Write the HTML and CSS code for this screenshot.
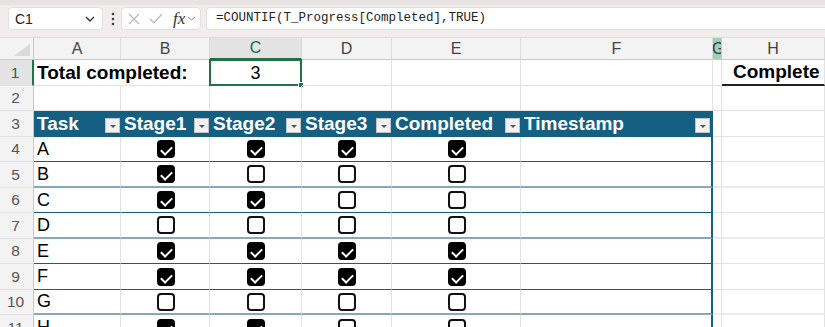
FILE: index.html
```html
<!DOCTYPE html>
<html>
<head>
<meta charset="utf-8">
<link rel="stylesheet" href="styles.css">
</head>
<body>
<div class="topbar">
  <div class="namebox"><span class="nb-text">C1</span><svg class="nb-chev" width="10" height="6" viewBox="0 0 10 6"><path d="M1 1 L5 5 L9 1" fill="none" stroke="#333" stroke-width="1.3"/></svg></div>
  <svg class="dots" width="4" height="14" viewBox="0 0 4 14"><circle cx="2" cy="2" r="1.3" fill="#444"/><circle cx="2" cy="7" r="1.3" fill="#444"/><circle cx="2" cy="12" r="1.3" fill="#444"/></svg>
  <div class="funcbox">
    <svg class="ic-x" width="12" height="12" viewBox="0 0 12 12"><path d="M1 1 L11 11 M11 1 L1 11" stroke="#b8b8b8" stroke-width="1.2" fill="none"/></svg>
    <svg class="ic-ok" width="14" height="11" viewBox="0 0 14 11"><path d="M1 6 L5 10 L13 1" stroke="#b8b8b8" stroke-width="1.2" fill="none"/></svg>
    <span class="fx">fx</span>
    <svg class="fx-chev" width="9" height="5" viewBox="0 0 9 5"><path d="M1 1 L4.5 4 L8 1" fill="none" stroke="#888" stroke-width="1"/></svg>
  </div>
  <div class="formula">=COUNTIF(T_Progress[Completed],TRUE)</div>
</div>

<div class="sheet">
  <div class="row">
    <div class="ch corner"><svg width="16" height="12" viewBox="0 0 16 12"><path d="M16 0 L16 12 L0 12 Z" fill="#d9d9d9"/></svg></div>
    <div class="ch">A</div><div class="ch">B</div><div class="ch sel">C</div><div class="ch">D</div><div class="ch">E</div><div class="ch">F</div><div class="ch gsel"><span>G</span></div><div class="ch">H</div>
  </div>

  <div class="row">
    <div class="rh rsel">1</div>
    <div class="c overflow bold">Total completed:</div>
    <div class="c"></div>
    <div class="c active">3<span class="handle"></span></div>
    <div class="c"></div><div class="c"></div><div class="c"></div><div class="c"></div>
    <div class="c heading bold">Complete</div>
  </div>

  <div class="row">
    <div class="rh">2</div>
    <div class="c"></div><div class="c"></div><div class="c"></div><div class="c"></div><div class="c"></div><div class="c"></div><div class="c"></div><div class="c"></div>
  </div>

  <div class="row">
    <div class="rh">3</div>
    <div class="th"><span>Task</span><span class="dd"></span></div>
    <div class="th"><span>Stage1</span><span class="dd"></span></div>
    <div class="th"><span>Stage2</span><span class="dd"></span></div>
    <div class="th"><span>Stage3</span><span class="dd"></span></div>
    <div class="th"><span>Completed</span><span class="dd"></span></div>
    <div class="th last"><span>Timestamp</span><span class="dd"></span></div>
    <div class="c"></div><div class="c"></div>
  </div>

  <div class="row dark">
    <div class="rh">4</div><div class="td">A</div>
    <div class="td cbc"><span class="cb on"></span></div><div class="td cbc"><span class="cb on"></span></div><div class="td cbc"><span class="cb on"></span></div><div class="td cbc"><span class="cb on"></span></div>
    <div class="td last"></div><div class="c"></div><div class="c"></div>
  </div>
  <div class="row light">
    <div class="rh">5</div><div class="td">B</div>
    <div class="td cbc"><span class="cb on"></span></div><div class="td cbc"><span class="cb"></span></div><div class="td cbc"><span class="cb"></span></div><div class="td cbc"><span class="cb"></span></div>
    <div class="td last"></div><div class="c"></div><div class="c"></div>
  </div>
  <div class="row dark">
    <div class="rh">6</div><div class="td">C</div>
    <div class="td cbc"><span class="cb on"></span></div><div class="td cbc"><span class="cb on"></span></div><div class="td cbc"><span class="cb"></span></div><div class="td cbc"><span class="cb"></span></div>
    <div class="td last"></div><div class="c"></div><div class="c"></div>
  </div>
  <div class="row light">
    <div class="rh">7</div><div class="td">D</div>
    <div class="td cbc"><span class="cb"></span></div><div class="td cbc"><span class="cb"></span></div><div class="td cbc"><span class="cb"></span></div><div class="td cbc"><span class="cb"></span></div>
    <div class="td last"></div><div class="c"></div><div class="c"></div>
  </div>
  <div class="row dark">
    <div class="rh">8</div><div class="td">E</div>
    <div class="td cbc"><span class="cb on"></span></div><div class="td cbc"><span class="cb on"></span></div><div class="td cbc"><span class="cb on"></span></div><div class="td cbc"><span class="cb on"></span></div>
    <div class="td last"></div><div class="c"></div><div class="c"></div>
  </div>
  <div class="row dark">
    <div class="rh">9</div><div class="td">F</div>
    <div class="td cbc"><span class="cb on"></span></div><div class="td cbc"><span class="cb on"></span></div><div class="td cbc"><span class="cb on"></span></div><div class="td cbc"><span class="cb on"></span></div>
    <div class="td last"></div><div class="c"></div><div class="c"></div>
  </div>
  <div class="row light">
    <div class="rh">10</div><div class="td">G</div>
    <div class="td cbc"><span class="cb"></span></div><div class="td cbc"><span class="cb"></span></div><div class="td cbc"><span class="cb"></span></div><div class="td cbc"><span class="cb"></span></div>
    <div class="td last"></div><div class="c"></div><div class="c"></div>
  </div>
  <div class="row dark">
    <div class="rh">11</div><div class="td">H</div>
    <div class="td cbc"><span class="cb on"></span></div><div class="td cbc"><span class="cb on"></span></div><div class="td cbc"><span class="cb"></span></div><div class="td cbc"><span class="cb"></span></div>
    <div class="td last"></div><div class="c"></div><div class="c"></div>
  </div>
</div>
</body>
</html>
```

FILE: styles.css
```css
* { box-sizing: border-box; }
html, body { margin: 0; padding: 0; }
body {
  width: 825px;
  height: 327px;
  overflow: hidden;
  background: #fff;
  font-family: "Liberation Sans", Arial, sans-serif;
  color: #000;
}

/* formula bar */
.topbar {
  height: 38px;
  background: #f1eded;
  border-top: 5px solid #e8e3e3;
  border-bottom: 1px solid #dcd8d8;
  display: flex;
  align-items: flex-start;
  padding: 2px 0 0 8px;
}
.namebox {
  width: 95px;
  height: 23px;
  background: #fff;
  border: 1px solid #e2dfdf;
  border-radius: 4px;
  display: flex;
  align-items: center;
  justify-content: space-between;
  padding: 0 7px 0 6px;
}
.nb-text { font-size: 14px; color: #222; }
.dots { margin: 5px 6px 0 8px; }
.funcbox {
  width: 80px;
  height: 23px;
  background: #fff;
  border: 1px solid #e2dfdf;
  border-radius: 4px;
  display: flex;
  align-items: center;
  padding-left: 6px;
}
.ic-ok { margin-left: 9px; }
.fx {
  font-family: "Liberation Serif", "Times New Roman", serif;
  font-style: italic;
  font-size: 17px;
  color: #333;
  margin-left: 10px;
  line-height: 1;
}
.fx-chev { margin-left: 2px; }
.formula {
  flex: 1;
  height: 23px;
  margin-left: 5px;
  background: #fff;
  border: 1px solid #e2dfdf;
  border-right: none;
  border-radius: 4px 0 0 4px;
  font-family: "Liberation Mono", "Courier New", monospace;
  font-size: 12.5px;
  color: #222;
  padding-left: 9px;
  line-height: 21px;
  white-space: nowrap;
}

/* sheet grid */
.sheet {
  display: grid;
  grid-template-columns: 34px 87px 89px 92px 90px 129px 192px 9px 1fr;
  grid-template-rows: 22px 26px 25px 26px 25px 26px 25px 26px 25px 26px 25px 26px;
}
.row { display: contents; }

.ch {
  background: #f3f3f3;
  border-right: 1px solid #dadada;
  border-bottom: 1px solid #c9c9c9;
  color: #444;
  font-size: 16px;
  display: flex;
  align-items: center;
  justify-content: center;
  overflow: hidden;
}
.ch.corner { justify-content: flex-end; align-items: flex-end; padding: 0 3px 3px 0; border-right: 1px solid #c9c9c9; }
.ch.sel {
  background: #e3e3e3;
  color: #0f6f3c;
  border-bottom: 2px solid #217346;
}
.ch.gsel {
  background: #9fd2b1;
  color: #335;
  justify-content: flex-start;
  border-right: 1px solid #c9c9c9;
}
.ch.gsel span { margin-left: -1px; }

.rh {
  background: #f3f3f3;
  border-right: 1px solid #c9c9c9;
  border-bottom: 1px solid #e2e2e2;
  color: #555;
  font-size: 15.5px;
  display: flex;
  align-items: center;
  justify-content: center;
  padding-right: 2px;
}
.rh.rsel {
  background: #e3e3e3;
  color: #0f6f3c;
  border-right: 2px solid #217346;
}

.c {
  border-right: 1px solid #e2e2e2;
  border-bottom: 1px solid #e2e2e2;
  display: flex;
  align-items: center;
  font-size: 18px;
  white-space: nowrap;
  position: relative;
}
.bold { font-weight: bold; font-size: 19px; }
.c.overflow { border-right: none; padding-left: 3px; overflow: visible; z-index: 1; }
.c.active {
  border: 2px solid #217346;
  margin: -1px 0 0 -1px;
  justify-content: center;
  font-size: 18px;
  padding-top: 1px;
}
.handle {
  position: absolute;
  right: -4px;
  bottom: -4px;
  width: 6px;
  height: 6px;
  background: #217346;
  border: 1px solid #fff;
}
.c.heading {
  border-bottom: 2px solid #222;
  padding-left: 11px;
  overflow: hidden;
}

/* table */
.th {
  background: #156082;
  color: #fff;
  font-weight: bold;
  font-size: 19px;
  display: flex;
  align-items: center;
  justify-content: space-between;
  padding: 0 1px 0 3px;
  white-space: nowrap;
}
.th.last { border-right: 2px solid #156082; }
.dd {
  width: 15px;
  height: 15px;
  background: #f2f2f2;
  border: 1px solid #c3c3c3;
  margin-top: 2px;
  position: relative;
  flex: none;
}
.dd::after {
  content: "";
  position: absolute;
  left: 4px;
  top: 6px;
  border-left: 3px solid transparent;
  border-right: 3px solid transparent;
  border-top: 3px solid #555;
}

.td {
  border-right: 1px solid #e2e2e2;
  border-bottom: 1px solid #156082;
  display: flex;
  align-items: center;
  font-size: 18px;
  padding-left: 3px;
}
.light > .td { border-bottom: 2px solid #84a9bf; }
.td.last { border-right: 2px solid #156082; }
.td.cbc { justify-content: center; padding-left: 0; }
.light > .c { border-bottom-width: 2px; border-bottom-color: #ebebeb; }

.cb {
  width: 18px;
  height: 18px;
  border: 2px solid #111;
  border-radius: 4px;
  background: #fff;
  display: block;
  position: relative;
  margin-left: 1px;
}
.cb.on {
  background: #000;
  border-color: #000;
}
.cb.on::after {
  content: "";
  position: absolute;
  left: 4px;
  top: 2px;
  width: 5px;
  height: 9px;
  border-right: 2px solid #fff;
  border-bottom: 2px solid #fff;
  transform: rotate(45deg);
}
```
